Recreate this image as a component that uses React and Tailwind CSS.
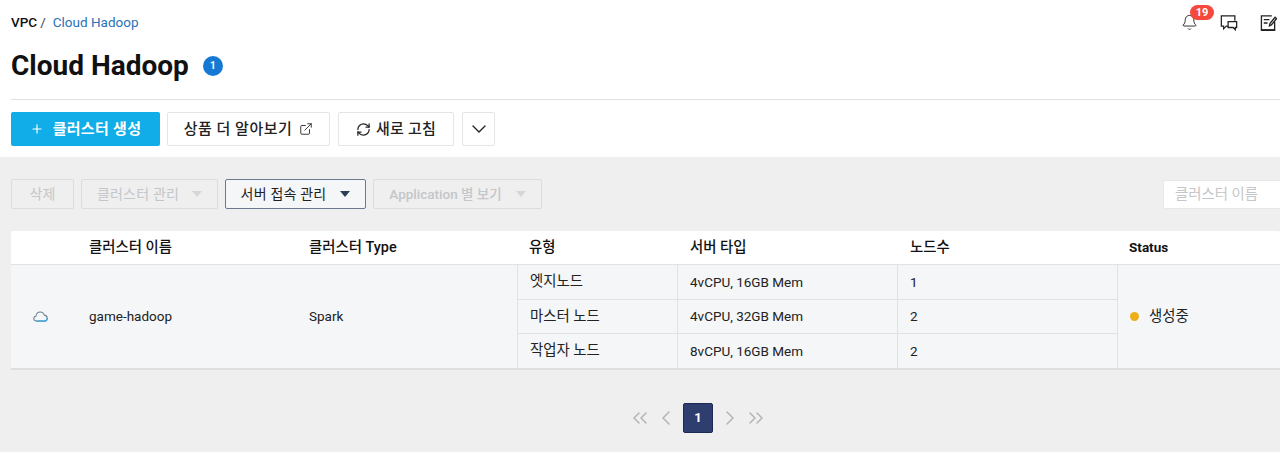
import { Plus, ExternalLink, RefreshCw, ChevronDown, ChevronsLeft, ChevronLeft, ChevronRight, ChevronsRight, Bell } from "lucide-react";

const font = "font-['Roboto','Noto_Sans_CJK_KR',sans-serif]";

const nodes = [
  { type: "엣지노드", server: "4vCPU, 16GB Mem", count: 1 },
  { type: "마스터 노드", server: "4vCPU, 32GB Mem", count: 2 },
  { type: "작업자 노드", server: "8vCPU, 16GB Mem", count: 2 },
];

function TopIcons() {
  return (
    <div className="flex items-center pr-[3px]">
      <div className="relative">
        <Bell className="w-[17px] h-[19px] text-[#222]" strokeWidth={1.3} />
        <span className="absolute -top-[8px] left-[9px] h-[15px] w-[24px] rounded-full bg-[#f4493c] text-white text-[11px] font-bold leading-[15px] text-center">19</span>
      </div>
      <svg width="18" height="18" viewBox="0 0 20 19" fill="none" stroke="#222" strokeWidth="1.4" className="ml-[22px]">
        <path d="M13 13H7l-3 3v-3H1.500V1.500h15V7" />
        <path d="M9 8h9.500v6.500h-1.500v2.500l-2.500-2.500H9z" fill="#fff" />
      </svg>
      <svg width="17" height="18" viewBox="0 0 18 18" fill="none" stroke="#222" strokeWidth="1.4" className="ml-[22px]">
        <path d="M15.500 8v8.500H1.500v-15h11" />
        <path d="M1 16.500h15" strokeWidth="2" />
        <path d="M4 5.500h6M4 9h4" />
        <path d="M10 12l.5-2.500 5.500-6.500 1.500 1.500-5.500 6.500z" />
      </svg>
    </div>
  );
}

function ToolButton({ children, disabled, className }) {
  return (
    <button
      type="button"
      className={`h-[30px] flex items-center justify-center rounded-[2px] border ${disabled ? "border-[#dcdcdc] text-[#c4c6c9]" : "border-[#6b7a90] text-[#222] bg-[#f5f6f8]"} ${className}`}
    >
      {children}
    </button>
  );
}

function Caret({ color }) {
  return <span className={`w-0 h-0 border-x-[5px] border-x-transparent border-t-[6px] ${color}`} />;
}

function CloudIcon() {
  return (
    <svg width="15" height="11" viewBox="0 0 16 12" fill="none" strokeWidth="1.1">
      <path d="M3.500 11C1.800 11 .7 9.800 .7 8.300c0-1.400 1-2.500 2.300-2.600C3.300 3 5.300 1 7.700 1c2.200 0 3.900 1.500 4.400 3.500 1.800.1 3.200 1.700 3.200 3.400 0 1.700-1.300 3.100-3 3.100z" stroke="#6f7f8f" />
      <path d="M3.500 11h8.800c1.700 0 3-1.400 3-3.100" stroke="#2fa6e0" strokeWidth="1.400" />
    </svg>
  );
}

export default function App() {
  return (
    <div className={`${font} w-[1280px] h-[452px] overflow-hidden bg-[#efefef] flex flex-col`}>
      <div className="h-[157px] bg-white pl-[11px] flex flex-col">
        <div className="flex items-center justify-between h-[45px]">
          <div className="text-[13.500px] flex items-center">
            <span className="font-medium text-[#111]">VPC</span>
            <span className="text-[#444] ml-[3px]">/</span>
            <span className="text-[#2a71b8] ml-[7px]">Cloud Hadoop</span>
          </div>
          <TopIcons />
        </div>
        <div className="flex items-center h-[41px]">
          <h1 className="text-[28px] font-bold text-[#111] leading-none">Cloud Hadoop</h1>
          <span className="ml-[14px] w-[20px] h-[20px] rounded-full bg-[#1579d3] text-white text-[10px] font-bold flex items-center justify-center">1</span>
        </div>
        <div className="mt-[13px] border-t border-[#e0e0e0] h-[13px]" />
        <div className="flex">
          <button type="button" className="w-[149px] h-[34px] rounded-[2px] bg-[#11ade8] text-white text-[15px] tracking-[0.3px] font-bold flex items-center justify-center">
            <Plus className="w-[14px] h-[14px] mr-[9px]" strokeWidth={2} />
            클러스터 생성
          </button>
          <button type="button" className="ml-[7px] w-[163px] h-[34px] rounded-[2px] border border-[#e5e5e5] text-[#222] text-[15px] tracking-[0.5px] font-medium flex items-center justify-center">
            상품 더 알아보기
            <ExternalLink className="w-[14px] h-[14px] ml-[7px]" strokeWidth={1.5} />
          </button>
          <button type="button" className="ml-[8px] w-[116px] h-[34px] rounded-[2px] border border-[#e5e5e5] text-[#222] text-[15px] tracking-[0.2px] font-medium flex items-center justify-center">
            <RefreshCw className="w-[15px] h-[15px] mr-[5px]" strokeWidth={2} />
            새로 고침
          </button>
          <button type="button" className="ml-[8px] w-[33px] h-[34px] rounded-[2px] border border-[#e5e5e5] text-[#222] flex items-center justify-center">
            <ChevronDown className="w-[24px] h-[24px]" strokeWidth={1.4} />
          </button>
        </div>
      </div>

      <div className="pl-[11px] pt-[22px] flex-1 flex flex-col">
        <div className="flex items-center">
          <ToolButton disabled className="w-[63px] text-[14px]">삭제</ToolButton>
          <ToolButton disabled className="w-[137px] ml-[7px] gap-[13px] text-[14px] tracking-[0.2px]">클러스터 관리 <Caret color="border-t-[#d4d6d9]" /></ToolButton>
          <ToolButton className="w-[141px] ml-[7px] gap-[14px] text-[14px] tracking-[0.2px]">서버 접속 관리 <Caret color="border-t-[#2c3e57]" /></ToolButton>
          <ToolButton disabled className="w-[169px] ml-[7px] gap-[14px] text-[13.500px] font-medium">Application 별 보기 <Caret color="border-t-[#d4d6d9]" /></ToolButton>
          <div className="ml-auto w-[117px] h-[29px] bg-white border border-r-0 border-[#e8e8e8] rounded-l-[2px] pl-[11px] text-[14.400px] leading-[27px] text-[#c4c6c9]">클러스터 이름</div>
        </div>

        <div className="mt-[22px] bg-white rounded-t-[2px]">
          <div className="h-[34px] flex items-center border-b border-[#e2e2e2] text-[14.400px] font-medium text-[#111]">
            <div className="w-[78px]" />
            <div className="w-[220px]">클러스터 이름</div>
            <div className="w-[208px]">클러스터 Type</div>
            <div className="w-[160px] pl-[12px]">유형</div>
            <div className="w-[220px] pl-[13px]">서버 타입</div>
            <div className="w-[220px] pl-[13px]">노드수</div>
            <div className="flex-1 pl-[12px] font-bold text-[13.500px]">Status</div>
          </div>
          <div className="h-[105px] flex bg-[#f5f6f8] border-b-[2px] border-[#dedede] text-[13.500px] text-[#222]">
            <div className="w-[78px] flex items-center pl-[22px]">
              <CloudIcon />
            </div>
            <div className="w-[220px] flex items-center">game-hadoop</div>
            <div className="w-[208px] flex items-center">Spark</div>
            <div className="w-[600px] flex flex-col">
              {nodes.map((node, i) => (
                <div key={node.type} className={`flex flex-1 items-center ${i > 0 ? "border-t border-[#e2e2e2]" : ""}`}>
                  <div className="w-[160px] self-stretch flex items-center pl-[12px] border-l border-[#e2e2e2] text-[14.400px]">{node.type}</div>
                  <div className="w-[220px] self-stretch flex items-center pl-[12px] border-l border-[#e2e2e2]">{node.server}</div>
                  <div className="w-[220px] self-stretch flex items-center pl-[12px] border-l border-[#e2e2e2]">{node.count}</div>
                </div>
              ))}
            </div>
            <div className="flex-1 flex items-center pl-[12px] border-l border-[#e2e2e2] text-[14.400px]">
              <span className="w-[9px] h-[9px] rounded-full bg-[#edb019] mr-[10px]" />
              생성중
            </div>
          </div>
        </div>

        <div className="mt-[33px] w-[1374px] shrink-0 flex items-center justify-center text-[#b4b4b4]">
          <ChevronsLeft className="w-[24px] h-[24px]" strokeWidth={1.5} />
          <ChevronLeft className="w-[24px] h-[24px] ml-[2px]" strokeWidth={1.5} />
          <span className="ml-[5px] w-[30px] h-[30px] rounded-[2px] bg-[#2e3e6f] border border-[#1c2a55] text-white text-[13px] font-bold flex items-center justify-center">1</span>
          <ChevronRight className="w-[24px] h-[24px] ml-[5px]" strokeWidth={1.5} />
          <ChevronsRight className="w-[24px] h-[24px] ml-[2px]" strokeWidth={1.5} />
        </div>
      </div>
    </div>
  );
}
